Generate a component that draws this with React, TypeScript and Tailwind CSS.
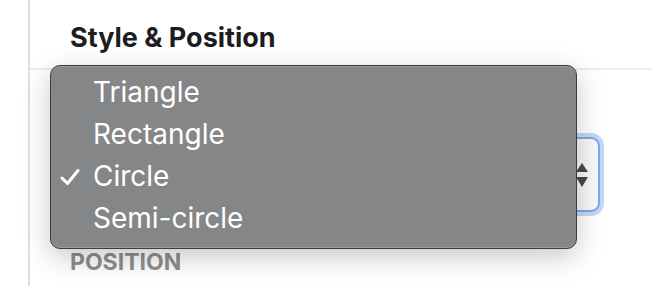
const shapes = ['Triangle', 'Rectangle', 'Circle', 'Semi-circle']

function ShapeMenu({ selected }: { selected: string }) {
  return (
    <div className="absolute left-[50px] top-[65px] w-[527px] h-[184px] rounded-[10px] border border-[#3c3c3e] bg-[#858688] shadow-[0_8px_28px_rgba(0,0,0,0.22),inset_0_1px_0_rgba(255,255,255,0.18),inset_0_-1px_0_rgba(255,255,255,0.18)] pt-[5px]">
      {shapes.map(name => (
        <div key={name} className="relative h-[42px] pl-[42px] text-[28px] leading-[42px] text-white">
          {name === selected && (
            <svg className="absolute left-[9px] top-[13px]" width="20" height="18" viewBox="0 0 20 18">
              <path d="M2 10 L7.5 15.5 L18 2.5" fill="none" stroke="white" strokeWidth="3" strokeLinecap="round" strokeLinejoin="round" />
            </svg>
          )}
          {name}
        </div>
      ))}
    </div>
  )
}

export default function App() {
  return (
    <div className="relative h-[286px] w-[652px] overflow-hidden bg-white font-['Inter','Liberation_Sans',sans-serif]">
      <div className="ml-[28px] h-full border-l-2 border-[#e0e0e0]">
        <h2 className="pl-[40px] pt-[24px] text-[27px] leading-[27px] font-bold text-[#1d1d1f]">
          Style &amp; Position
        </h2>
        <div className="mt-[17px] border-t-2 border-[#ececec]" />
        <div className="pl-[40px] pr-[52px] pt-[67px]">
          <div className="relative h-[75px] rounded-[9px] border-2 border-[#7ba8ec] bg-[#f8f8f8] shadow-[0_0_0_4px_#c3d7f6]">
            <svg className="absolute right-[10px] top-[22px]" width="12" height="30" viewBox="0 0 12 30">
              <path d="M6 2 L12 11 L0 11 Z" fill="#48484a" />
              <path d="M0 16 L12 16 L6 26 Z" fill="#48484a" />
            </svg>
          </div>
        </div>
        <div className="pl-[40px] pt-[39px] text-[23px] leading-[23px] font-bold text-[#8e8e8e]">POSITION</div>
      </div>
      <ShapeMenu selected="Circle" />
    </div>
  )
}
